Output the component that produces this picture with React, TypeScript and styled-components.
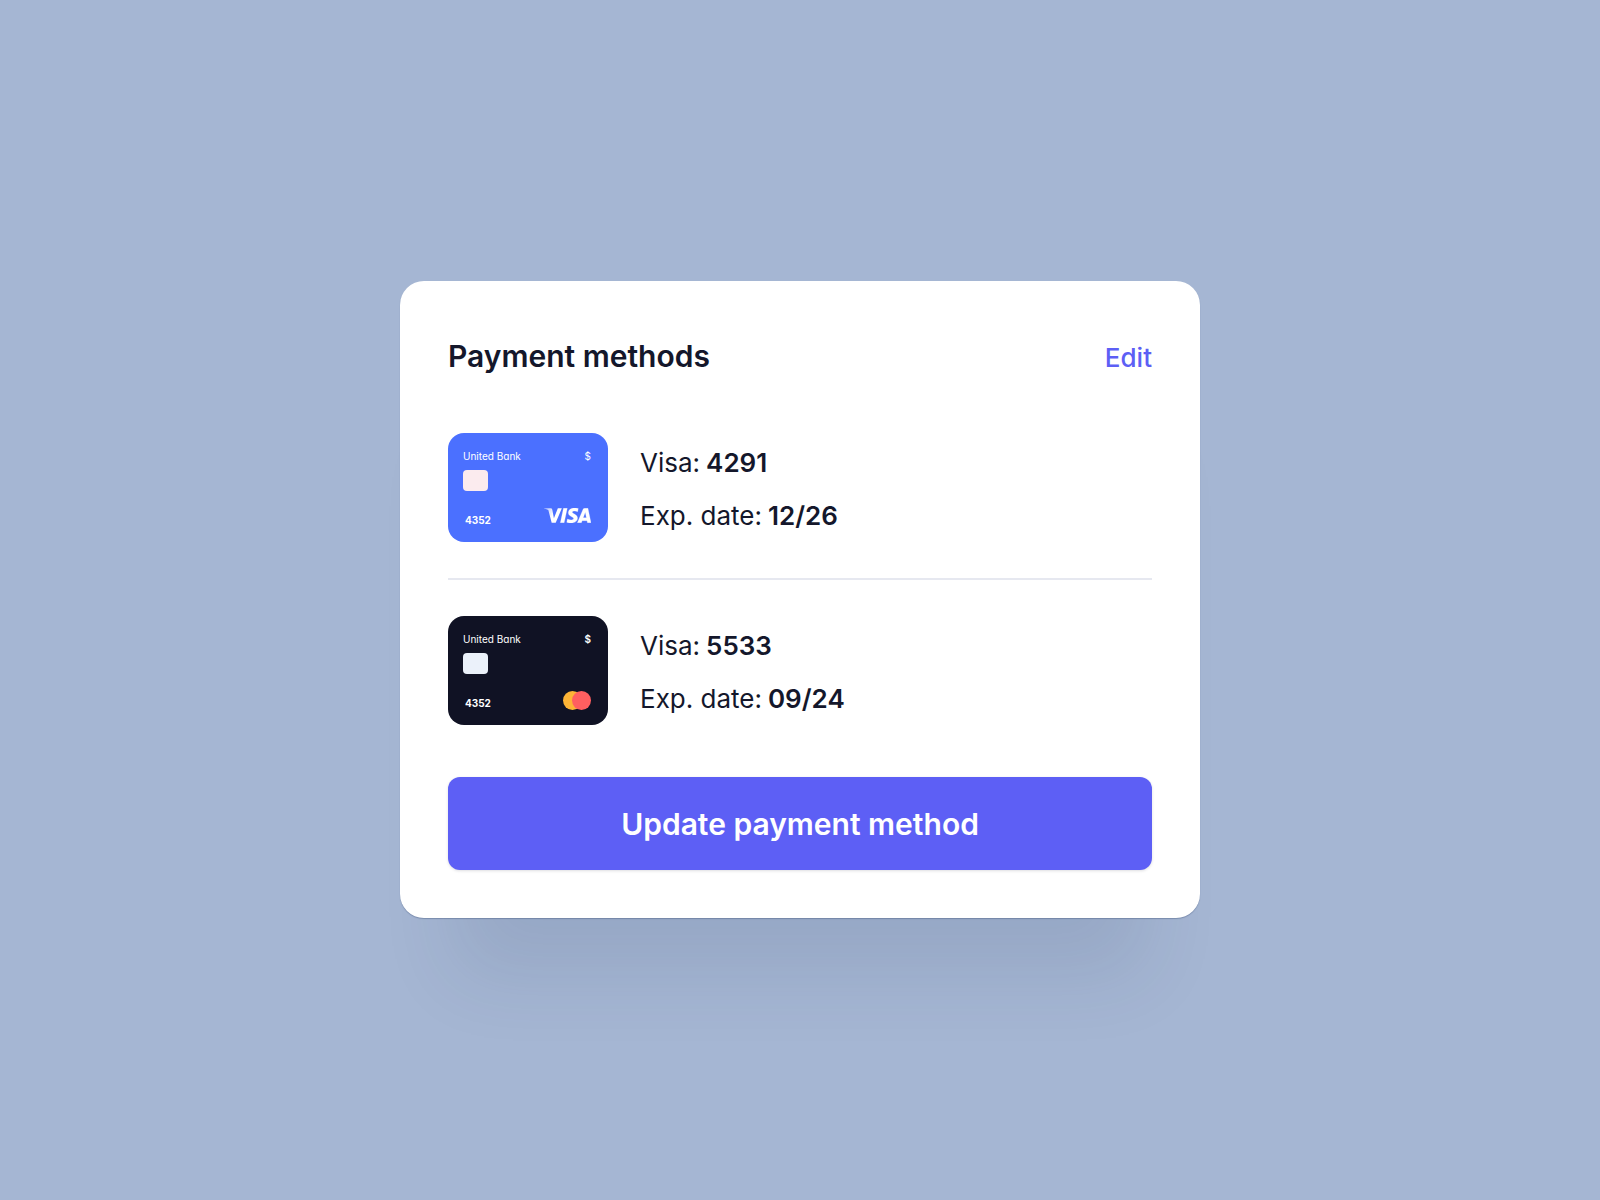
import React from "react";
import styled, { createGlobalStyle } from "styled-components";

const GlobalStyle = createGlobalStyle`
  *, *::before, *::after { box-sizing: border-box; }
  body {
    margin: 0;
    background: #a5b6d3;
    color: #14172b;
    font-family: Inter, "Liberation Sans", sans-serif;
    -webkit-font-smoothing: antialiased;
  }
  h1, dl, dd, ul, p { margin: 0; padding: 0; }
`;

const Page = styled.main`
  min-height: 100vh;
  display: flex;
  align-items: center;
  justify-content: center;
  padding-bottom: 1px;
`;

const Panel = styled.section`
  width: 100%;
  max-width: 800px;
  padding: 48px;
  border-radius: 24px;
  background: #fff;
  box-shadow:
    0 1px 1px rgba(50, 72, 115, 0.36),
    0 112px 72px -56px rgba(40, 56, 92, 0.11);
`;

const Header = styled.header`
  display: flex;
  align-items: baseline;
  justify-content: space-between;
  padding: 7px 0 5px;
  margin-bottom: 14px;
`;

const Title = styled.h1`
  font-size: 30px;
  font-weight: 600;
  line-height: 40px;
`;

const EditButton = styled.button`
  padding: 0;
  border: 0;
  background: none;
  color: #5d5ff5;
  font: inherit;
  font-size: 26px;
  font-weight: 500;
  line-height: 40px;
  cursor: pointer;
`;

const MethodList = styled.ul`
  list-style: none;
  margin-bottom: 16px;
`;

const Method = styled.li`
  display: flex;
  align-items: center;
  gap: 32px;
  padding: 36px 0;

  & + & {
    border-top: 2px solid #e6e8f0;
  }

  &:last-child {
    padding-bottom: 0;
  }
`;

const Details = styled.dl`
  display: grid;
  gap: 20px;
  padding-top: 2px;
`;

const Detail = styled.div`
  display: flex;
  gap: 6px;
  font-size: 26px;
  line-height: 33px;
`;

const Value = styled.dd`
  font-weight: 600;
`;

const BankCard = styled.div<{ $background: string }>`
  flex: none;
  display: flex;
  flex-direction: column;
  justify-content: space-between;
  width: 160px;
  height: 109px;
  padding: 16px 17px 15px 15px;
  border-radius: 16px;
  background: ${(p) => p.$background};
  color: #fff;
`;

const CardRow = styled.div`
  display: flex;
  justify-content: space-between;
  font-size: 10px;
  line-height: 14px;
  font-feature-settings: "cv11";
`;

const Currency = styled.span<{ $bold: boolean }>`
  font-weight: ${(p) => (p.$bold ? 600 : 400)};
`;

const Chip = styled.div<{ $color: string }>`
  width: 25px;
  height: 21px;
  margin-top: 7px;
  border-radius: 4px;
  background: ${(p) => p.$color};
`;

const CardFooter = styled(CardRow)`
  align-items: flex-start;
  height: 19px;
  margin-top: auto;
`;

const CardNumber = styled.span`
  padding: 5px 0 0 2px;
  font-weight: 700;
`;

const UpdateButton = styled.button`
  display: block;
  width: 100%;
  margin-top: 52px;
  padding: 27px 24px 26px;
  border: 0;
  border-radius: 12px;
  background: #5d5ff5;
  box-shadow: 0 1px 3px rgba(20, 23, 43, 0.14);
  color: #fff;
  font: inherit;
  font-size: 30px;
  font-weight: 600;
  line-height: 40px;
  cursor: pointer;
`;

function VisaLogo() {
  return (
    <svg width="47" height="15" viewBox="0 8.17 24 7.66" role="img" aria-label="Visa logo">
      <defs>
        <linearGradient id="visa-wing" x1="0" y1="0" x2="1" y2="0.4">
          <stop offset="0.1" stopColor="#fff" stopOpacity="0.6" />
          <stop offset="0.6" stopColor="#fff" />
        </linearGradient>
      </defs>
      <path
        fill="url(#visa-wing)"
        d="M9.112 8.262L5.97 15.758H3.92L2.374 9.775c-.094-.368-.175-.503-.461-.658C1.447 8.864.677 8.627 0 8.479l.046-.217h3.3a.904.904 0 01.894.764l.817 4.338 2.018-5.102z"
      />
      <path
        fill="#fff"
        stroke="#fff"
        strokeWidth="0.12"
        d="M17.145 13.311c.008-1.979-2.736-2.088-2.717-2.972.006-.269.262-.555.822-.628a3.66 3.66 0 011.913.336l.34-1.59a5.207 5.207 0 00-1.814-.333c-1.917 0-3.266 1.02-3.278 2.479-.012 1.079.963 1.68 1.698 2.04.756.367 1.01.603 1.006.931-.005.504-.602.725-1.16.734-.975.015-1.54-.263-1.992-.473l-.351 1.642c.453.208 1.289.39 2.156.398 2.037 0 3.37-1.006 3.377-2.564m5.061 2.447H24l-1.565-7.496h-1.656a.883.883 0 00-.826.55l-2.909 6.946h2.036l.405-1.12h2.488zm-2.163-2.656l1.02-2.815.588 2.815zm-8.16-4.84l-1.603 7.496H8.34l1.605-7.496z"
      />
    </svg>
  );
}

function MastercardLogo() {
  return (
    <svg width="28" height="19" viewBox="0 0 28 19" role="img" aria-label="Mastercard logo">
      <circle cx="9.5" cy="9.5" r="9.5" fill="#fdb436" />
      <circle cx="18.5" cy="9.5" r="9.5" fill="#ff5f60" />
    </svg>
  );
}

const methods = [
  {
    number: "4291",
    expires: "12/26",
    background: "#4b70ff",
    chip: "#fbebee",
    boldCurrency: false,
    logo: <VisaLogo />,
  },
  {
    number: "5533",
    expires: "09/24",
    background: "#101224",
    chip: "#ebf1fa",
    boldCurrency: true,
    logo: <MastercardLogo />,
  },
];

export default function App() {
  return (
    <>
      <GlobalStyle />
      <Page>
        <Panel>
          <Header>
            <Title>Payment methods</Title>
            <EditButton type="button">Edit</EditButton>
          </Header>
          <MethodList>
            {methods.map((m) => (
              <Method key={m.number}>
                <BankCard $background={m.background}>
                  <CardRow>
                    <span>United Bank</span>
                    <Currency $bold={m.boldCurrency}>$</Currency>
                  </CardRow>
                  <Chip $color={m.chip} />
                  <CardFooter>
                    <CardNumber>4352</CardNumber>
                    {m.logo}
                  </CardFooter>
                </BankCard>
                <Details>
                  <Detail>
                    <dt>Visa:</dt>
                    <Value>{m.number}</Value>
                  </Detail>
                  <Detail>
                    <dt>Exp. date:</dt>
                    <Value>{m.expires}</Value>
                  </Detail>
                </Details>
              </Method>
            ))}
          </MethodList>
          <UpdateButton type="button">Update payment method</UpdateButton>
        </Panel>
      </Page>
    </>
  );
}
